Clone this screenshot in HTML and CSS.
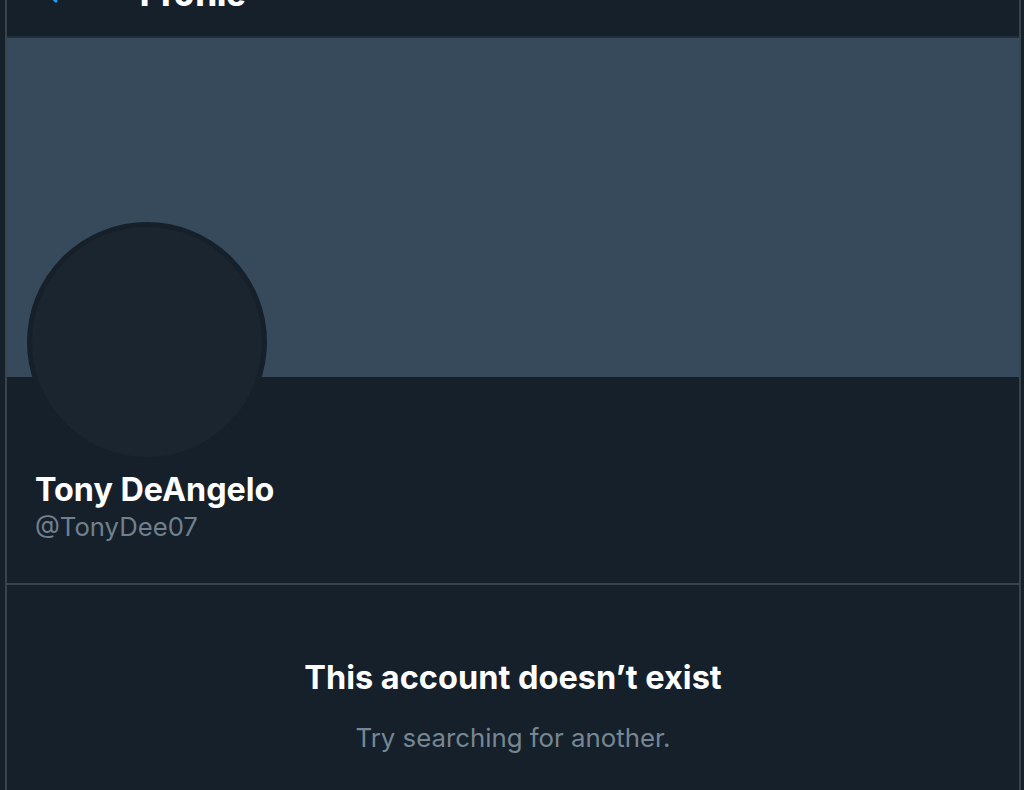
FILE: index.html
```html
<!DOCTYPE html>
<html>
<head>
<meta charset="utf-8">
<link rel="stylesheet" href="styles.css">
</head>
<body>
<main class="column">
  <header class="topbar">
    <div class="back">
      <svg viewBox="0 0 24 24" width="35" height="35"><path fill="#1da1f2" d="M20 11H7.414l4.293-4.293c.39-.39.39-1.023 0-1.414s-1.023-.39-1.414 0l-6 6c-.39.39-.39 1.023 0 1.414l6 6c.195.195.45.293.707.293s.512-.098.707-.293c.39-.39.39-1.023 0-1.414L7.414 13H20c.553 0 1-.447 1-1s-.447-1-1-1z"/></svg>
    </div>
    <h1 class="title">Profile</h1>
  </header>
  <div class="banner"></div>
  <section class="profile">
    <div class="avatar"></div>
    <div class="name">Tony DeAngelo</div>
    <div class="handle">@TonyDee07</div>
  </section>
  <section class="empty">
    <div class="empty-title">This account doesn’t exist</div>
    <div class="empty-sub">Try searching for another.</div>
  </section>
</main>
</body>
</html>
```
FILE: styles.css
```css
html, body {
  margin: 0;
  padding: 0;
  background: #15202b;
  overflow: hidden;
  height: 790px;
}
body {
  font-family: Inter, "Liberation Sans", sans-serif;
  color: #ffffff;
}
.column {
  margin-left: 5px;
  width: 1012px;
  height: 835px;
  border-left: 2px solid #38444d;
  border-right: 2px solid #38444d;
  margin-top: -45px;
  display: flex;
  flex-direction: column;
}
.topbar {
  height: 81px;
  flex: none;
  display: flex;
  align-items: center;
  border-bottom: 2px solid #222f3b;
}
.back {
  width: 35px;
  height: 35px;
  margin-left: 33px;
  margin-top: -6px;
}
.back svg { display: block; }
.title {
  margin: 0 0 0 65px;
  font-size: 32.5px;
  font-weight: 800;
  line-height: 1;
}
.banner {
  height: 339px;
  flex: none;
  background: #374a5b;
}
.profile {
  padding: 0 28px;
  height: 206px;
  flex: none;
  display: flex;
  flex-direction: column;
  align-items: flex-start;
  border-bottom: 2px solid #38444d;
}
.avatar {
  width: 230px;
  height: 230px;
  flex: none;
  border-radius: 50%;
  background: #1b2530;
  border: 5px solid #16202b;
  margin: -155px 0 0 -8px;
}
.name {
  font-size: 32.3px;
  font-weight: 700;
  line-height: 40px;
  margin-top: 8px;
}
.handle {
  font-size: 25.7px;
  color: #8899a6;
  line-height: 30px;
  margin-top: 2px;
  opacity: 0.8;
}
.empty {
  text-align: center;
  padding-top: 73px;
}
.empty-title {
  font-size: 32.5px;
  font-weight: 700;
  line-height: 40px;
}
.empty-sub {
  font-size: 25.8px;
  color: #8899a6;
  line-height: 30px;
  margin-top: 25px;
  opacity: 0.85;
}
```
